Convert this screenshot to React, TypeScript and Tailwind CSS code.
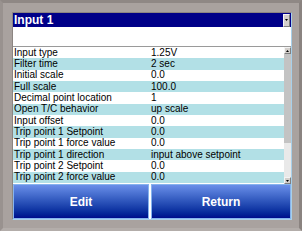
import React from 'react';

const rows: [string, string][] = [
  ['Input type', '1.25V'],
  ['Filter time', '2 sec'],
  ['Initial scale', '0.0'],
  ['Full scale', '100.0'],
  ['Decimal point location', '1'],
  ['Open T/C behavior', 'up scale'],
  ['Input offset', '0.0'],
  ['Trip point 1 Setpoint', '0.0'],
  ['Trip point 1 force value', '0.0'],
  ['Trip point 1 direction', 'input above setpoint'],
  ['Trip point 2 Setpoint', '0.0'],
  ['Trip point 2 force value', '0.0'],
];

function ArrowBox({ up }: { up?: boolean }) {
  return (
    <div className="h-[7px] w-[7px] bg-[#d4d0cc] border border-[#f4f4f4] border-r-[#808080] border-b-[#808080] flex items-center justify-center">
      <svg width="3" height="2" viewBox="0 0 3 2">
        <path d={up ? 'M0 2 L1.5 0 L3 2 Z' : 'M0 0 L1.5 2 L3 0 Z'} fill="#000" />
      </svg>
    </div>
  );
}

export default function App() {
  return (
    <div
      className="w-[302px] h-[231px] bg-[#a9a29f] border-[3px] border-t-[#8f8885] border-l-[#99928f] border-r-[#8a8380] border-b-[#b3adaa] overflow-hidden"
      style={{ fontFamily: '"Liberation Sans", Arial, sans-serif' }}
    >
      <div className="pt-[9px] pl-[9px]">
        <div className="border border-[#8c8582] border-r-[#a8d0ea] border-b-[#a8d0ea] bg-white h-[208px] w-[280px] flex flex-col">
          {/* title */}
          <div className="h-[14px] bg-[#000088] flex items-center">
            <span className="flex-1 pl-[1px] text-white font-bold text-[12px] leading-none">Input 1</span>
            <div className="h-[13px] w-[7px] mr-[1px] bg-[#d4d0cc] border border-[#f4f4f4] border-r-[#808080] border-b-[#808080] flex items-center justify-center">
              <svg width="3" height="2" viewBox="0 0 3 2">
                <path d="M0 0 L1.5 2 L3 0 Z" fill="#000" />
              </svg>
            </div>
          </div>
          <div className="h-[19px] bg-white" />
          {/* list */}
          <div className="h-[138px] border-t border-[#9a9a9a] flex">
            <div className="flex-1 flex flex-col">
              {rows.map(([k, v], i) => (
                <div
                  key={k}
                  className={`h-[11.33px] flex items-center text-[10px] leading-none text-black ${i % 2 === 1 ? 'bg-[#b2e0e6]' : 'bg-white'}`}
                >
                  <span className="w-[138px] pl-[1px]">{k}</span>
                  <span>{v}</span>
                </div>
              ))}
            </div>
            <div className="w-[7px] flex flex-col bg-[#e9e9e9]">
              <ArrowBox up />
              <div className="h-[89px] bg-[#c3c3c3]" />
              <div className="flex-1" />
              <ArrowBox />
            </div>
          </div>
          {/* buttons */}
          <div className="flex-1 flex gap-[2px]">
            <button className="w-[136px] h-full border border-[#86b4ee] bg-gradient-to-b from-[#6a8fe9] to-[#000a8c] text-white font-bold text-[12px]">
              Edit
            </button>
            <button className="flex-1 h-full border border-[#86b4ee] bg-gradient-to-b from-[#6a8fe9] to-[#000a8c] text-white font-bold text-[12px]">
              Return
            </button>
          </div>
        </div>
      </div>
    </div>
  );
}
